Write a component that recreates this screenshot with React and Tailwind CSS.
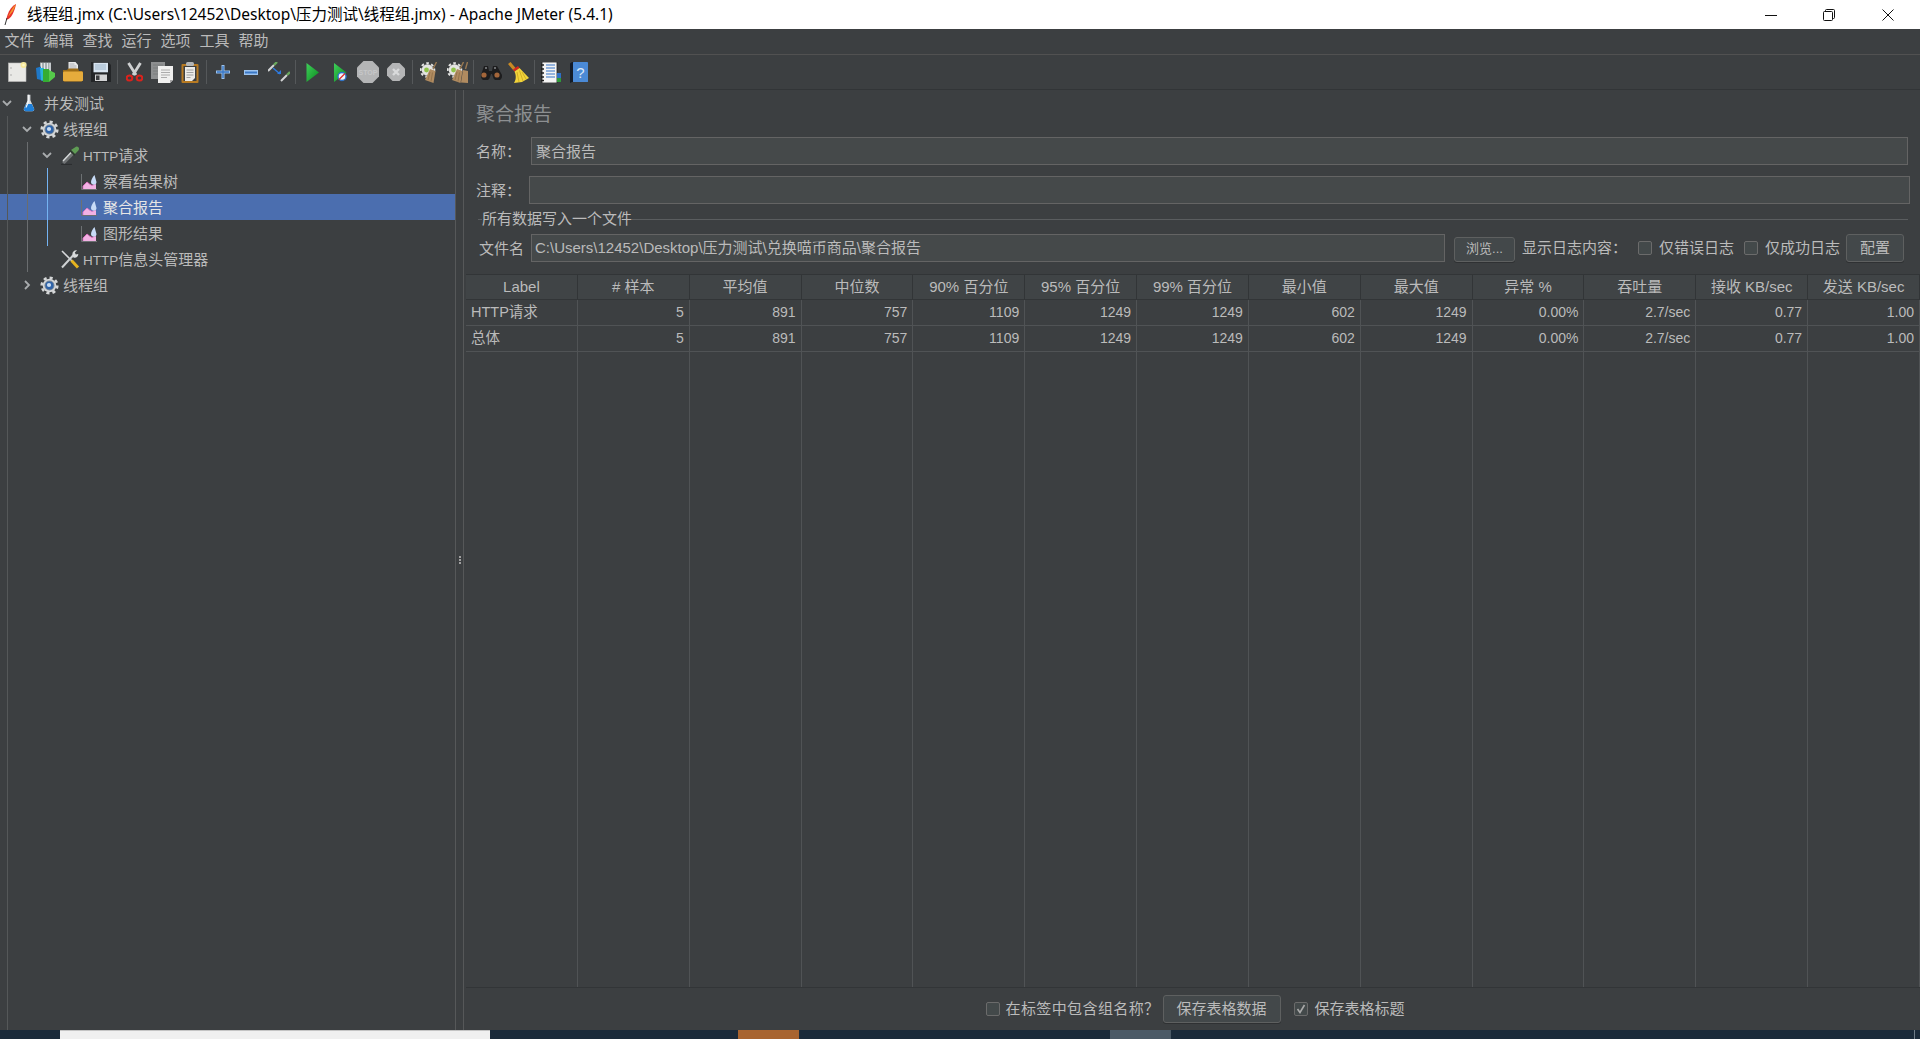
import React from 'react';

const menus = ['文件', '编辑', '查找', '运行', '选项', '工具', '帮助'];

const headers = ['Label', '# 样本', '平均值', '中位数', '90% 百分位', '95% 百分位', '99% 百分位', '最小值', '最大值', '异常 %', '吞吐量', '接收 KB/sec', '发送 KB/sec'];

const rows = [
  ['HTTP请求', '5', '891', '757', '1109', '1249', '1249', '602', '1249', '0.00%', '2.7/sec', '0.77', '1.00'],
  ['总体', '5', '891', '757', '1109', '1249', '1249', '602', '1249', '0.00%', '2.7/sec', '0.77', '1.00'],
];

function Chevron({ open }) {
  return (
    <svg width="10" height="10" viewBox="0 0 10 10" fill="none" stroke="#a9acae" strokeWidth="1.8">
      {open ? <path d="M1 3l4 4 4-4" /> : <path d="M3 1l4 4-4 4" />}
    </svg>
  );
}

function FlaskIcon() {
  return (
    <svg width="12" height="20" viewBox="0 0 13 20">
      <path d="M5 1h3v6l4 9c.6 1.600-.4 3-2 3H3c-1.600 0-2.600-1.400-2-3l4-9z" fill="#d8dcdf" />
      <path d="M3.400 11h6.200l2.300 5c.5 1.400-.4 3-1.900 3H3c-1.500 0-2.400-1.600-1.900-3z" fill="#1f7fd8" />
      <path d="M5 1h1.400v8L4 15H2.600L5 8z" fill="#f4f6f7" />
    </svg>
  );
}

function GearIcon() {
  return (
    <svg width="19" height="19" viewBox="0 0 19 19">
      <circle cx="9.500" cy="9.500" r="6.800" fill="#d5d7d8" />
      <circle cx="9.500" cy="9.500" r="7.800" fill="none" stroke="#d5d7d8" strokeWidth="2.600" strokeDasharray="3.100 3" />
      <circle cx="9.500" cy="9.500" r="5" fill="#7c8a98" />
      <circle cx="9.500" cy="9.500" r="4" fill="#2f63a8" />
      <circle cx="9" cy="9" r="2.100" fill="#c9ddf2" />
    </svg>
  );
}

function DropperIcon() {
  return (
    <svg width="20" height="20" viewBox="0 0 20 20">
      <path d="M2 17l9-10 3 2.600-9.600 9.600" fill="#6e7173" />
      <path d="M3 16l8-8.600" stroke="#d9dcdd" strokeWidth="1.400" />
      <path d="M11 5l4 4 3.400-3.600c1-1.100.8-2.400 0-3.200s-2.200-1-3.200 0z" fill="#5f9c54" />
      <path d="M10 5.400l4.800 4.800" stroke="#2c3a2c" strokeWidth="1.600" />
      <path d="M1 19.400h11" stroke="#2b2d2e" strokeWidth="1" />
    </svg>
  );
}

function ChartIcon() {
  return (
    <svg width="17" height="17" viewBox="0 0 17 17">
      <path d="M.5 1v15.500H16" fill="none" stroke="#6d7173" strokeWidth="1" />
      <path d="M2 16v-3l4-4 3 2.400 2 1 4-1.400V16z" fill="#f2b2e4" />
      <path d="M2 16v-3l4-4 3 2.400 2 1 4-1.400" fill="none" stroke="#e86fc8" strokeWidth=".8" />
      <path d="M13.500 2C11.400 4.400 10 7 10 9c0 1.800 1.400 2.800 3 2.800S15.500 10.600 15.500 9z" fill="#c7dbf7" />
    </svg>
  );
}

function ToolsIcon() {
  return (
    <svg width="20" height="20" viewBox="0 0 20 20" fill="none">
      <path d="M2 2l10 10" stroke="#d6d8da" strokeWidth="1.600" />
      <path d="M11.500 11.500l6.500 7" stroke="#e6b41f" strokeWidth="3" />
      <path d="M2 18.500L13.500 6" stroke="#cfd2d4" strokeWidth="2" />
      <path d="M12.500 6c-.6-2.500 1.400-5 4.400-4.600L14.800 3.600l1 1.800 2.400-.4c.4 2.800-2.600 4.600-4.800 3.400z" fill="#d8dadb" />
    </svg>
  );
}

function NewIcon() {
  return (
    <svg width="19" height="20" viewBox="0 0 19 20">
      <rect x=".5" y="1" width="17.500" height="18.500" fill="#e9e9e6" stroke="#bdbdbb" strokeWidth=".6" />
      <circle cx="3" cy="6" r=".7" fill="#9a9a9a" />
      <circle cx="3" cy="13" r=".7" fill="#9a9a9a" />
      <circle cx="15.500" cy="3" r="3" fill="#f6e89a" />
      <circle cx="15.500" cy="3" r="1.300" fill="#fff7c8" />
    </svg>
  );
}

function TemplatesIcon() {
  return (
    <svg width="19" height="21" viewBox="0 0 19 21">
      <rect x="4" y=".5" width="11" height="9" fill="#a5adb0" />
      <path d="M5.500 1v8M8.500 1v8M11.500 1v8M14 1v8" stroke="#e3e6e7" strokeWidth="1" />
      <path d="M0 6l5-1.500V18l-4-1z" fill="#1f78c8" />
      <path d="M4 6h4v13l-3-.4z" fill="#2cb4d8" />
      <path d="M7 7h6v13H7z" fill="#35ad32" />
      <path d="M13 8l6 3v4l-6 5z" fill="#55c94a" />
    </svg>
  );
}

function OpenIcon() {
  return (
    <svg width="20" height="20" viewBox="0 0 20 20">
      <path d="M5.500 0h7l2.500 3v6h-9.500z" fill="#e9eaea" />
      <path d="M6.500 2h5M6.500 4h7M6.500 6h7" stroke="#9aa0a4" strokeWidth=".8" />
      <path d="M0 8h4l1.500-1.500h9.500l1 2.500h3.500v9c0 .8-.5 1.500-1.500 1.500H1.500c-1 0-1.500-.7-1.500-1.500z" fill="#9c6c16" />
      <path d="M0 11c0-1 .6-1.500 1.500-1.500h17c.9 0 1.500.5 1.500 1.500v7c0 .8-.5 1.200-1.500 1.200h-17C.5 19.200 0 18.800 0 18z" fill="#e6ac3c" />
    </svg>
  );
}

function SaveIcon() {
  return (
    <svg width="20" height="20" viewBox="0 0 20 20">
      <path d="M0 0h17l3 3v17H0z" fill="#232527" />
      <rect x="2.500" y=".8" width="14.500" height="9.500" fill="#d8e4ef" />
      <path d="M4 3h11M4 5h11M4 7h11" stroke="#8fa9c4" strokeWidth=".8" />
      <rect x="4" y="12.500" width="12" height="6.500" fill="#d2d3d4" />
      <rect x="5" y="13.500" width="3.500" height="4.500" fill="#3b3d3f" />
    </svg>
  );
}

function CutIcon() {
  return (
    <svg width="17" height="20" viewBox="0 0 17 20" fill="none">
      <path d="M2.500 1l7.500 12M14.500 1l-7.500 12" stroke="#cfd1d2" strokeWidth="2.800" />
      <ellipse cx="3.500" cy="16" rx="2.800" ry="2.600" stroke="#d9231d" strokeWidth="2" />
      <ellipse cx="13.500" cy="16" rx="2.800" ry="2.600" stroke="#d9231d" strokeWidth="2" />
    </svg>
  );
}

function CopyIcon() {
  return (
    <svg width="22" height="21" viewBox="0 0 22 21">
      <rect x="0" y="0" width="14" height="17" fill="#8d8f90" />
      <path d="M2 3h10M2 6h10M2 9h10M2 12h10" stroke="#77797a" strokeWidth=".8" />
      <path d="M7 4h15v14l-3 3H7z" fill="#f0f0ef" />
      <path d="M10 8h9M10 10.500h9M10 13h9M10 15.500h6" stroke="#9a9a9a" strokeWidth=".8" />
      <path d="M19 21v-3h3z" fill="#a7a7a7" />
    </svg>
  );
}

function PasteIcon() {
  return (
    <svg width="18" height="21" viewBox="0 0 18 21">
      <rect x=".5" y="2" width="17" height="19" rx="1" fill="#b77a22" />
      <rect x="2.500" y="4" width="13" height="15" fill="#3c3f41" />
      <path d="M4 5h10v11l-3 3H4z" fill="#ecebe8" />
      <path d="M5.500 8h7M5.500 10.500h7M5.500 13h7M5.500 15.500h4" stroke="#8e8e8e" strokeWidth=".8" />
      <rect x="5" y="0" width="8" height="4" rx="1.500" fill="#b3b5b6" />
    </svg>
  );
}

function PlusIcon() {
  return (
    <svg width="14" height="14" viewBox="0 0 14 14">
      <path d="M5.500 0h3v5.500H14v3H8.500V14h-3V8.500H0v-3h5.500z" fill="#9cc3ee" />
      <path d="M6.300 1h1.400v5.300H13v1.400H7.700V13H6.300V7.700H1V6.300h5.300z" fill="#3a78c6" />
    </svg>
  );
}

function MinusIcon() {
  return (
    <svg width="14" height="5" viewBox="0 0 14 5">
      <rect x="0" y="0" width="14" height="5" fill="#9cc3ee" />
      <rect x="1" y="1.500" width="12" height="2" fill="#3a78c6" />
    </svg>
  );
}

function ToggleIcon() {
  return (
    <svg width="22" height="20" viewBox="0 0 22 20" fill="none">
      <path d="M0 9l6-6" stroke="#d2d4d5" strokeWidth="2" />
      <path d="M6 3l3-3" stroke="#6aa85e" strokeWidth="2.400" />
      <path d="M13 19l6-6" stroke="#d2d4d5" strokeWidth="2" />
      <path d="M19 13l3-3" stroke="#6aa85e" strokeWidth="2.400" />
      <path d="M5 6l7 6" stroke="#2d7ae0" strokeWidth="1.400" />
      <path d="M9 12h4V8z" fill="#2d7ae0" />
    </svg>
  );
}

function PlayIcon({ small }) {
  return (
    <svg width={small ? 14 : 13} height="19" viewBox="0 0 13 19">
      <defs>
        <linearGradient id={small ? 'playa' : 'playb'} x1="0" y1="0" x2="1" y2="1">
          <stop offset="0" stopColor="#3fd05a" />
          <stop offset="1" stopColor="#0b8a1e" />
        </linearGradient>
      </defs>
      <path d="M.5 0L13 9.500.5 19z" fill={`url(#${small ? 'playa' : 'playb'})`} />
      {small && <circle cx="8.500" cy="13.500" r="4" fill="#f2f5f8" stroke="#2d72c9" strokeWidth="1.400" />}
      {small && <path d="M5.500 16.500l6-6" stroke="#e02b2b" strokeWidth="1.200" />}
    </svg>
  );
}

function StopIcon() {
  return (
    <svg width="22" height="22" viewBox="0 0 22 22">
      <path d="M6.500 0h9L22 6.500v9L15.500 22h-9L0 15.500v-9z" fill="#b4b5b6" />
      <text x="11" y="13.500" textAnchor="middle" fontSize="7" fontWeight="700" fill="#c6c7c8" fontFamily="Liberation Sans">STOP</text>
    </svg>
  );
}

function ShutdownIcon() {
  return (
    <svg width="18" height="18" viewBox="0 0 18 18">
      <path d="M5.500 0h7L18 5.500v7L12.500 18h-7L0 12.500v-7z" fill="#b4b5b6" />
      <path d="M6 6l6 6M12 6l-6 6" stroke="#d9dadb" strokeWidth="2.400" />
    </svg>
  );
}

function ClearIcon({ all }) {
  return (
    <svg width={all ? 21 : 19} height="21" viewBox={all ? '0 0 21 21' : '0 0 19 21'}>
      <circle cx="7.500" cy="8" r="5.800" fill="#e4e4e2" />
      <circle cx="7.500" cy="8" r="6.800" fill="none" stroke="#e4e4e2" strokeWidth="2" strokeDasharray="2.600 2.500" />
      <circle cx="6.500" cy="8" r="2.400" fill="#8fc24a" />
      <path d="M16.500 0L13 7" stroke="#9b7a52" strokeWidth="1.400" />
      <path d="M10 7l5.500 2L13.500 21 5 18z" fill="#b08b60" />
      <path d="M10 10l-2 8M12.500 10.500l-1.500 9" stroke="#8a6a44" strokeWidth=".7" />
      {all && <path d="M20.500 0l-2 7" stroke="#9b7a52" strokeWidth="1.400" />}
      {all && <path d="M16 8l5 1V21l-7-.5z" fill="#b08b60" />}
    </svg>
  );
}

function BinocularsIcon() {
  return (
    <svg width="23" height="15" viewBox="0 0 23 15">
      <path d="M5 1h4l1 5h3l1-5h4l5 9a4.500 4.500 0 01-9 2l-1-3h-1l-1 3a4.500 4.500 0 01-9-2z" fill="#1d1d1e" />
      <circle cx="5" cy="10" r="2.600" fill="#a4663a" />
      <circle cx="18" cy="10" r="2.600" fill="#a4663a" />
      <path d="M6 2h2v2H6zM15 2h2v2h-2z" fill="#6b6d6f" />
    </svg>
  );
}

function BroomIcon() {
  return (
    <svg width="21" height="21" viewBox="0 0 21 21">
      <path d="M0 2l2.500-2 5.500 6.500-2.500 2z" fill="#c98a24" />
      <path d="M5 7.500l5-3.500 1.500 2-5 3.500z" fill="#d8261e" />
      <path d="M6.500 9.500l5-3.500L21 16l-7 4-8 1c2-3 2.500-7 .5-11.500z" fill="#f2d43a" />
      <path d="M9 10l2 10M11.500 8.500L15 19M14 10l4 7" stroke="#c49d1c" strokeWidth=".7" />
    </svg>
  );
}

function LogIcon() {
  return (
    <svg width="20" height="21" viewBox="0 0 20 21">
      <rect x="1" y="0" width="15" height="21" fill="#f4f4f4" stroke="#1e1e1e" strokeWidth=".8" />
      <path d="M0 3h3M0 7h3M0 11h3M0 15h3M0 18.500h3" stroke="#1c1c1c" strokeWidth="1.400" />
      <path d="M5 3h9M5 6h9M5 9h9M5 12h9M5 15h9" stroke="#3573c6" strokeWidth="1" />
      <rect x="16" y="11" width="4" height="5" fill="#2f6fc4" />
      <rect x="16" y="16" width="4" height="4" fill="#2f9a3a" />
    </svg>
  );
}

function HelpIcon() {
  return (
    <svg width="18" height="21" viewBox="0 0 18 21">
      <path d="M0 1.500L2 0h16v20H2l-2 1z" fill="#141c28" />
      <rect x="3" y="0" width="15" height="20" rx=".6" fill="#4b8ad6" />
      <text x="10.500" y="15.500" textAnchor="middle" fontSize="15" fill="#dce9f8" fontFamily="Liberation Sans">?</text>
    </svg>
  );
}

const toolbarGroups = [
  [NewIcon, TemplatesIcon, OpenIcon, SaveIcon],
  [CutIcon, CopyIcon, PasteIcon],
  [PlusIcon, MinusIcon, ToggleIcon],
  [PlayIcon, () => <PlayIcon small />, StopIcon, ShutdownIcon],
  [ClearIcon, () => <ClearIcon all />],
  [BinocularsIcon, BroomIcon],
  [LogIcon, HelpIcon],
];

// pad is the row's left padding, slot the room for the chevron, box the room for the icon
const treeRows = [
  { text: '并发测试', chevron: 'open', pad: 2, slot: 'w-[21px]', icon: FlaskIcon, box: 'w-[21px]' },
  { text: '线程组', chevron: 'open', pad: 22, slot: 'w-[18px]', icon: GearIcon, box: 'w-[23px]' },
  { text: '请求', latin: 'HTTP', chevron: 'open', pad: 42, slot: 'w-[18px]', icon: DropperIcon, box: 'w-[23px]' },
  { text: '察看结果树', pad: 81, icon: ChartIcon, box: 'w-[22px]' },
  { text: '聚合报告', pad: 81, icon: ChartIcon, box: 'w-[22px]', selected: true },
  { text: '图形结果', pad: 81, icon: ChartIcon, box: 'w-[22px]' },
  { text: '信息头管理器', latin: 'HTTP', pad: 60, icon: ToolsIcon, box: 'w-[23px]' },
  { text: '线程组', chevron: 'closed', pad: 22, slot: 'w-[18px]', icon: GearIcon, box: 'w-[23px]' },
];

function TreeRow({ row }) {
  const Icon = row.icon;
  return (
    <div className={`flex items-center h-[26px] text-[15px] ${row.selected ? 'bg-[#4b6eaf] text-[#e6e6e6]' : 'text-[#bbbbbb]'}`} style={{ paddingLeft: row.pad }}>
      {row.chevron && (
        <span className={`${row.slot} flex items-center`}>
          <Chevron open={row.chevron === 'open'} />
        </span>
      )}
      <span className={`${row.box} flex items-center`}>
        <Icon />
      </span>
      <span className="whitespace-nowrap pt-[2px]">
        {row.latin && <span className="text-[13.5px]">{row.latin}</span>}
        {row.text}
      </span>
    </div>
  );
}

function CheckBox({ checked }) {
  return (
    <span className="w-[14px] h-[14px] rounded-[2px] border border-[#6b6b6b] bg-[#43494a] flex items-center justify-center shrink-0">
      {checked && (
        <svg width="10" height="10" viewBox="0 0 10 10" fill="none" stroke="#a9a9a9" strokeWidth="1.600">
          <path d="M1.500 5l2.500 3.500L8.500 1" />
        </svg>
      )}
    </span>
  );
}

function App() {
  return (
    <div className="flex flex-col h-screen w-full overflow-hidden bg-[#3c3f41] text-[#bbbbbb] [font-family:'Liberation_Sans','Noto_Sans_CJK_SC',sans-serif]">
      {/* title bar */}
      <div className="flex items-center h-[29px] bg-white text-black shrink-0">
        <svg className="ml-[4px] mr-[9px]" width="14" height="22" viewBox="0 0 14 22">
          <path d="M12 0C8 2 5 6 3.500 11L2 16l2.500-1C8 13 11 6 12 0z" fill="#e8312a" />
          <path d="M12 0C9 3 6 8 4 13l5-6z" fill="#f49a2c" />
          <path d="M3 14L1 21" stroke="#333" strokeWidth="1" />
        </svg>
        <span className="flex-1 text-[15.5px] whitespace-nowrap [font-family:'Noto_Sans','Noto_Sans_CJK_SC',sans-serif]">
          线程组.jmx (C:\Users\12452\Desktop\压力测试\线程组.jmx) - Apache JMeter (5.4.1)
        </span>
        <div className="flex mr-[3px]">
          <button className="w-[58.5px] h-[29px] flex items-center justify-center">
            <svg width="12" height="12" viewBox="0 0 12 12"><path d="M0 6.500h12" stroke="#111" strokeWidth="1" /></svg>
          </button>
          <button className="w-[58.5px] h-[29px] flex items-center justify-center">
            <svg width="12" height="12" viewBox="0 0 12 12" fill="none" stroke="#111" strokeWidth="1">
              <rect x=".5" y="2.500" width="9" height="9" rx="1" />
              <path d="M2.500 2.500V1.500a1 1 0 011-1h7a1 1 0 011 1v7a1 1 0 01-1 1h-1" />
            </svg>
          </button>
          <button className="w-[58.5px] h-[29px] flex items-center justify-center">
            <svg width="12" height="12" viewBox="0 0 12 12" stroke="#111" strokeWidth="1"><path d="M.5.500l11 11M11.500.500l-11 11" /></svg>
          </button>
        </div>
      </div>

      {/* menu bar */}
      <div className="flex items-center h-[26px] shrink-0 border-b border-[#515151] text-[15px]">
        {menus.map((m) => (
          <span key={m} className="w-[39px] text-center">{m}</span>
        ))}
      </div>

      {/* toolbar */}
      <div className="flex items-center h-[35px] pl-[3px] shrink-0 border-b border-[#323537]">
        {toolbarGroups.map((group, i) => (
          <React.Fragment key={i}>
            {i > 0 && <span className="w-px h-[24px] mx-[2px] bg-[#55585a]" />}
            {group.map((Icon, j) => (
              <span key={j} className="w-[28px] h-[28px] flex items-center justify-center">
                <Icon />
              </span>
            ))}
          </React.Fragment>
        ))}
      </div>

      <div className="flex flex-1 min-h-0">
        {/* tree */}
        <div className="relative w-[456px] shrink-0 border-r border-[#565859]">
          {treeRows.map((row, i) => (
            <TreeRow key={i} row={row} />
          ))}
          <span className="absolute left-[7px] top-[26px] bottom-0 w-px bg-[#555859]" />
          <span className="absolute left-[27px] top-[52px] h-[130px] w-px bg-[#6a6d6f]" />
          <span className="absolute left-[47px] top-[78px] h-[78px] w-px bg-[#74b3f2]" />
        </div>

        {/* split handle */}
        <div className="w-[8px] shrink-0 flex flex-col items-center justify-center gap-[1px] border-r border-[#565859]">
          <span className="w-[2px] h-[2px] bg-[#a0a0a0]" />
          <span className="w-[2px] h-[2px] bg-[#a0a0a0]" />
          <span className="w-[2px] h-[2px] bg-[#a0a0a0]" />
        </div>

        {/* report panel */}
        <div className="flex flex-col flex-1 min-w-0 pl-[2px]">
          <div className="pl-[10px] pt-[13px] h-[47px] text-[19px] leading-[24px] text-[#8c8f91]">聚合报告</div>

          <div className="flex items-center h-[28px] pl-[10px] pr-[12px]">
            <span className="w-[55px] text-[15px] pt-[2px]">名称：</span>
            <div className="flex-1 h-[28px] flex items-center pl-[4px] pt-[2px] bg-[#45494a] border border-[#646464] text-[15px]">聚合报告</div>
          </div>

          <div className="flex items-center h-[28px] mt-[11px] pl-[10px] pr-[10px]">
            <span className="w-[53px] text-[15px] pt-[2px]">注释：</span>
            <div className="flex-1 h-[28px] bg-[#45494a] border border-[#646464]" />
          </div>

          <div className="flex items-center h-[20px] mt-[5px] pl-[12px] pr-[12px]">
            <span className="w-[4px] h-px bg-[#5a5d5f]" />
            <span className="text-[15px] whitespace-nowrap">所有数据写入一个文件</span>
            <span className="flex-1 h-px bg-[#5a5d5f]" />
          </div>

          <div className="flex items-center h-[28px] mt-[5px] pl-[13px] pr-[16px]">
            <span className="w-[52px] text-[15px] pt-[2px]">文件名</span>
            <div className="w-[914px] h-[28px] flex items-center pl-[3px] bg-[#45494a] border border-[#646464] text-[15px] whitespace-nowrap">
              C:\Users\12452\Desktop\压力测试\兑换喵币商品\聚合报告
            </div>
            <button className="ml-[9px] w-[61px] h-[25px] mt-[2px] rounded-[3px] border border-[#5e6060] bg-[#43484a] text-[13px] shadow-[0_1px_0_#2f3133]">浏览...</button>
            <span className="ml-[7px] w-[116px] text-[15px] whitespace-nowrap">显示日志内容：</span>
            <CheckBox />
            <span className="ml-[7px] w-[85px] text-[15px] whitespace-nowrap">仅错误日志</span>
            <CheckBox />
            <span className="ml-[7px] w-[81px] text-[15px] whitespace-nowrap">仅成功日志</span>
            <button className="w-[58px] h-[28px] rounded-[3px] border border-[#5e6060] bg-[#43484a] text-[15px] shadow-[0_1px_0_#2f3133]">配置</button>
          </div>

          {/* table */}
          <div className="flex-1 min-h-0 mt-[12px] grid grid-cols-[repeat(13,minmax(0,1fr))] grid-rows-[25px_26px_26px_1fr] border-t border-b border-[#323537]">
            {headers.map((h) => (
              <div key={h} className="flex items-center justify-center bg-[#404446] border-r border-b border-[#323537] text-[15px] whitespace-nowrap">{h}</div>
            ))}
            {rows.map((row, i) =>
              row.map((cell, j) => (
                <div key={`${i}-${j}`} className={`flex items-center border-r border-b border-[#505355] whitespace-nowrap ${j === 0 ? 'pl-[5px] text-[14.5px]' : 'justify-end pr-[5px] text-[14px]'}`}>{cell}</div>
              ))
            )}
            {headers.map((h) => (
              <div key={h} className="border-r border-[#505355]" />
            ))}
          </div>

          {/* bottom options */}
          <div className="flex items-center justify-center h-[42px] shrink-0 text-[15px]">
            <div className="flex items-center pl-[4px]">
              <CheckBox />
              <span className="ml-[6px] mr-[10px] w-[147px] whitespace-nowrap tracking-[0.4px]">在标签中包含组名称？</span>
              <button className="w-[118px] h-[28px] rounded-[3px] border border-[#5e6060] bg-[#43484a] shadow-[0_1px_0_#2f3133]">保存表格数据</button>
              <span className="ml-[13px]"><CheckBox checked /></span>
              <span className="ml-[7px] w-[90px] whitespace-nowrap">保存表格标题</span>
            </div>
          </div>
        </div>
      </div>

      {/* piece of the desktop taskbar under the window */}
      <div className="flex h-[9px] shrink-0 bg-[#1b2b3a] overflow-hidden">
        <div className="ml-[60px] w-[430px] bg-[#f0f0f0] border-t border-[#c4c4c4]" />
        <div className="ml-[248px] w-[61px] bg-[#a86430]" />
        <div className="ml-[311px] w-[61px] bg-[#4b5a66]" />
        <div className="ml-[619px] w-[36px] pt-[6px] text-[13px] leading-[16px] text-white">17:03</div>
        <div className="ml-[88px] w-px bg-[#6f7d88]" />
      </div>
    </div>
  );
}

export default App;
